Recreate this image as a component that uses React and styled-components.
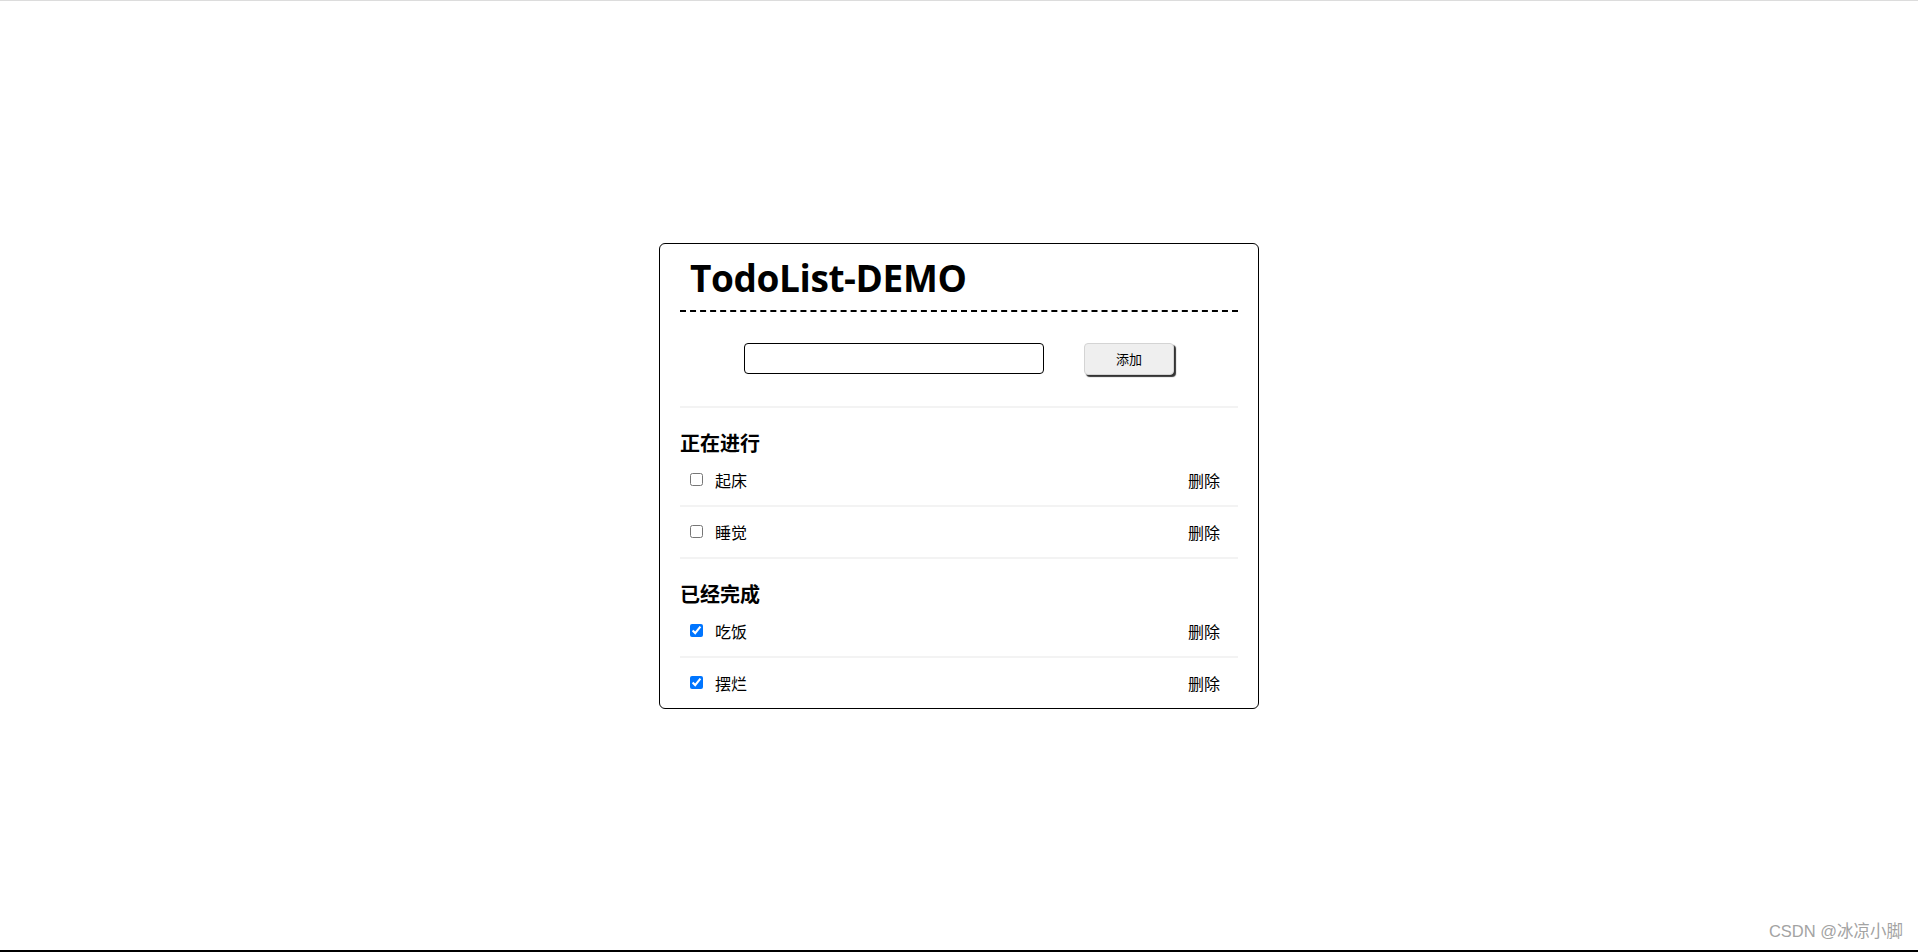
import { useState } from "react";
import styled, { createGlobalStyle } from "styled-components";

const GlobalStyle = createGlobalStyle`
  * {
    box-sizing: border-box;
  }
  body {
    margin: 0;
    background: #fff;
    font-family: "Noto Sans CJK SC", "Noto Sans", sans-serif;
    color: #000;
  }
`;

const Page = styled.div`
  position: relative;
  height: 100vh;
  border-top: 1px solid #dcdcdc;
  border-bottom: 2px solid #000;
  display: flex;
  align-items: center;
  justify-content: center;
`;

const Card = styled.div`
  width: 600px;
  border: 1px solid #000;
  border-radius: 6px;
  padding: 0 20px;
  overflow: hidden;
`;

const Header = styled.div`
  padding: 12px 0 10px;
  border-bottom: 2px dashed #000;
`;

const Title = styled.h1`
  margin: 0;
  padding-left: 10px;
  font-family: "Open Sans", "Noto Sans", sans-serif;
  font-size: 37px;
  line-height: 44px;
  font-weight: 700;
  letter-spacing: -0.4px;
`;

const Form = styled.div`
  display: flex;
  justify-content: center;
  align-items: flex-start;
  gap: 40px;
  padding: 31px 0 31px;
  border-bottom: 2px solid #f3f3f3;
`;

const TextInput = styled.input`
  width: 300px;
  height: 31px;
  border: 1px solid #000;
  border-radius: 4px;
  padding: 0 6px;
  font-size: 15px;
  outline: none;
`;

const AddButton = styled.button`
  width: 90px;
  height: 32px;
  background: #efefef;
  border: 1px solid #d4d4d4;
  border-radius: 4px;
  box-shadow: 2px 2px 1px #333;
  font-family: "Noto Sans CJK SC", sans-serif;
  font-size: 13px;
  color: #000;
  cursor: pointer;
`;

const SectionTitle = styled.h3`
  margin: 0;
  padding-top: 22px;
  font-size: 20px;
  line-height: 25px;
  font-weight: 700;
`;

const List = styled.ul`
  list-style: none;
  margin: 0;
  padding: 0;

  &:last-child li:last-child {
    height: 50px;
    border-bottom: none;
  }
`;

const Item = styled.li`
  display: flex;
  align-items: center;
  height: 52px;
  padding: 0 18px 0 10px;
  border-bottom: 2px solid #f3f3f3;
`;

const Check = styled.input`
  width: 13px;
  height: 13px;
  margin: 0 12px 0 0;
  accent-color: #0075ff;
`;

const Label = styled.span`
  flex: 1;
  font-size: 16px;
`;

const DeleteButton = styled.button`
  border: none;
  background: none;
  padding: 0;
  font-family: "Noto Sans CJK SC", sans-serif;
  font-size: 16px;
  color: #000;
  cursor: pointer;
`;

const Watermark = styled.div`
  position: absolute;
  right: 15px;
  bottom: 8px;
  font-family: "Liberation Sans", "Noto Sans CJK SC", sans-serif;
  font-size: 16.5px;
  color: #a3a3a3;
`;

const initialTodos = [
  { id: 1, text: "起床", done: false },
  { id: 2, text: "睡觉", done: false },
  { id: 3, text: "吃饭", done: true },
  { id: 4, text: "摆烂", done: true },
];

const App = () => {
  const [todos, setTodos] = useState(initialTodos);
  const [value, setValue] = useState("");

  const addTodo = () => {
    if (!value.trim()) return;
    setTodos([...todos, { id: Date.now(), text: value.trim(), done: false }]);
    setValue("");
  };

  const toggle = (id) =>
    setTodos(todos.map((t) => (t.id === id ? { ...t, done: !t.done } : t)));

  const remove = (id) => setTodos(todos.filter((t) => t.id !== id));

  const renderList = (items) => (
    <List>
      {items.map((todo) => (
        <Item key={todo.id}>
          <Check
            type="checkbox"
            checked={todo.done}
            onChange={() => toggle(todo.id)}
          />
          <Label>{todo.text}</Label>
          <DeleteButton onClick={() => remove(todo.id)}>删除</DeleteButton>
        </Item>
      ))}
    </List>
  );

  return (
    <>
      <GlobalStyle />
      <Page>
        <Card>
          <Header>
            <Title>TodoList-DEMO</Title>
          </Header>
          <Form>
            <TextInput
              value={value}
              onChange={(e) => setValue(e.target.value)}
              onKeyDown={(e) => e.key === "Enter" && addTodo()}
            />
            <AddButton onClick={addTodo}>添加</AddButton>
          </Form>
          <SectionTitle>正在进行</SectionTitle>
          {renderList(todos.filter((t) => !t.done))}
          <SectionTitle>已经完成</SectionTitle>
          {renderList(todos.filter((t) => t.done))}
        </Card>
        <Watermark>CSDN @冰凉小脚</Watermark>
      </Page>
    </>
  );
};

export default App;
